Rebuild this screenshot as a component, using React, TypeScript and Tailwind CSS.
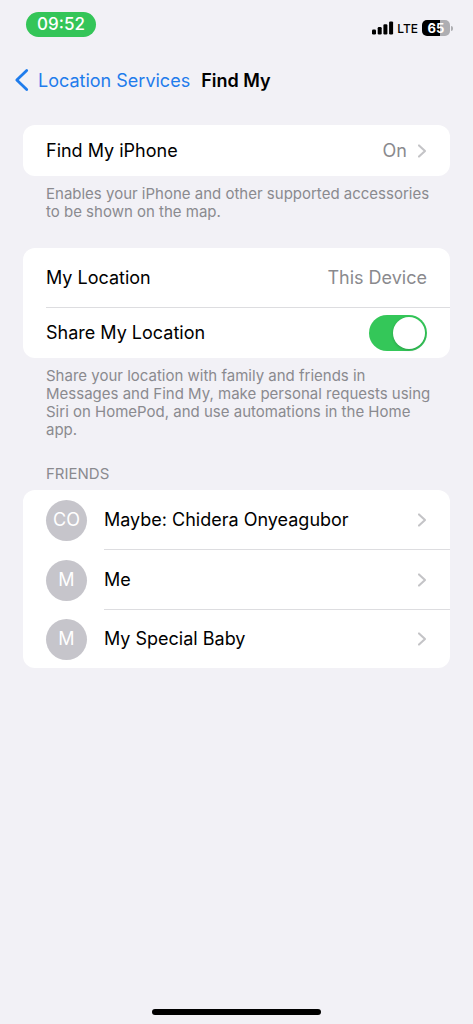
import { useState, type ReactNode } from "react";

const friends = [
  { initials: "CO", name: "Maybe: Chidera Onyeagubor" },
  { initials: "M", name: "Me" },
  { initials: "M", name: "My Special Baby" },
];

function Chevron() {
  return (
    <svg viewBox="0 0 10 16" className="h-4 w-[10px] shrink-0" fill="none" aria-hidden="true">
      <path d="M2 2.4 8 8l-6 5.6" stroke="#c4c4c7" strokeWidth="2.1" strokeLinecap="round" strokeLinejoin="round" />
    </svg>
  );
}

function StatusBar() {
  return (
    <div className="flex h-12 items-center justify-between pr-5 pl-[26px]">
      <div className="flex h-[25px] w-[70px] items-center justify-center rounded-full bg-[#34c558] pt-px text-[17px] font-medium text-white">
        09:52
      </div>
      <div className="flex items-center pt-2">
        <svg viewBox="0 0 22 14" className="h-[14px] w-[22px]" aria-hidden="true">
          <rect x="0" y="8.5" width="4" height="5" rx="1.2" />
          <rect x="5.7" y="6" width="4" height="7.5" rx="1.2" />
          <rect x="11.4" y="3.2" width="4" height="10.3" rx="1.2" />
          <rect x="17.1" y="0.4" width="4" height="13.1" rx="1.2" />
        </svg>
        <span className="ml-[3px] pt-px text-[12px] leading-4 font-medium">LTE</span>
        <div className="ml-1 flex items-center">
          <div className="flex h-4 w-7 items-center justify-center rounded-[5px] bg-linear-to-r from-black from-65% to-[#aeaeb2] to-65% text-[13px] leading-4 font-bold text-white">
            65
          </div>
          <div className="ml-px h-[5px] w-[2px] rounded-r-full bg-[#aeaeb2]" />
        </div>
      </div>
    </div>
  );
}

function Card({ children }: { children: ReactNode }) {
  return <div className="overflow-hidden rounded-xl bg-white">{children}</div>;
}

export default function App() {
  const [sharing, setSharing] = useState(true);

  return (
    <div className="flex min-h-screen flex-col bg-[#f2f1f6] font-['Inter','Liberation_Sans',sans-serif] text-black">
      <StatusBar />

      <header className="flex h-16 items-center gap-[11px] pl-[14px] text-[18px] leading-6">
        <a href="#location-services" className="flex items-center gap-2 text-[#1f7cec]">
          <svg viewBox="0 0 16 24" className="h-6 w-4" fill="none" aria-hidden="true">
            <path d="M12.7 2.5 2.8 12l9.9 9.5" stroke="currentColor" strokeWidth="2.8" strokeLinecap="round" strokeLinejoin="round" />
          </svg>
          <span className="pt-px">Location Services</span>
        </a>
        <h1 className="pt-px font-semibold">Find My</h1>
      </header>

      <main className="px-[23px] pt-[13px] text-[18px] leading-6">
        <Card>
          <button type="button" className="flex h-[51px] w-full items-center px-[23px] text-left">
            <span className="flex-1">Find My iPhone</span>
            <span className="mr-[10px] text-[#8a8a8e]">On</span>
            <Chevron />
          </button>
        </Card>
        <p className="pt-[9px] pr-4 pl-[23px] text-[15px] leading-[18px] text-[#8a8a8f]">
          Enables your iPhone and other supported accessories to be shown on the map.
        </p>

        <div className="pt-[27px]">
          <Card>
            <div className="pl-[23px]">
              <div className="flex h-[60px] items-center justify-between border-b border-[#dddde0] pr-[23px]">
                <span>My Location</span>
                <span className="text-[#8a8a8e]">This Device</span>
              </div>
              <div className="flex h-[50px] items-center justify-between pr-[23px]">
                <label htmlFor="share-location">Share My Location</label>
                <input
                  id="share-location"
                  type="checkbox"
                  role="switch"
                  checked={sharing}
                  onChange={(event) => setSharing(event.target.checked)}
                  className="flex h-9 w-[58px] appearance-none items-center rounded-full bg-[#e9e9ea] p-[2px] before:size-8 before:rounded-full before:bg-white before:shadow-[0_1px_3px_rgba(0,0,0,0.2)] checked:justify-end checked:bg-[#34c759]"
                />
              </div>
            </div>
          </Card>
        </div>
        <p className="pt-[9px] pr-4 pl-[23px] text-[15px] leading-[18px] text-[#8a8a8f]">
          Share your location with family and friends in Messages and Find My, make personal requests using Siri on
          HomePod, and use automations in the Home app.
        </p>

        <h2 className="px-[23px] pt-[26px] pb-[7px] text-[15px] leading-[18px] text-[#8a8a8f]">FRIENDS</h2>
        <Card>
          <ul>
            {friends.map((friend) => (
              <li key={friend.name} className="group/row">
                <button type="button" className="flex w-full items-center gap-[17px] pl-[23px] text-left">
                  <span className="flex size-[41px] shrink-0 items-center justify-center rounded-full bg-[#c6c5cb] text-[18px] text-white">
                    {friend.initials}
                  </span>
                  <span className="flex h-[60px] flex-1 items-center justify-between border-b border-[#dddde0] pr-[23px] group-last/row:h-[58px] group-last/row:border-b-0">
                    <span>{friend.name}</span>
                    <Chevron />
                  </span>
                </button>
              </li>
            ))}
          </ul>
        </Card>
      </main>

      <div className="mt-auto flex justify-center pt-8 pb-[9px]">
        <div className="h-[6px] w-[169px] rounded-full bg-black" />
      </div>
    </div>
  );
}
